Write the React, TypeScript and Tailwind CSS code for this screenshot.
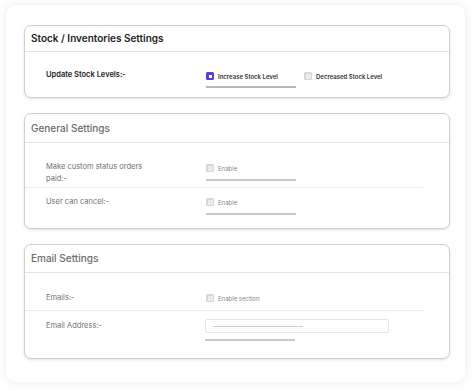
import React from 'react';

function Box({ checked = false }: { checked?: boolean }) {
  if (checked) {
    return (
      <span className="flex h-[8px] w-[8px] items-center justify-center rounded-[1.5px] bg-[#5a3bd8]">
        <span className="h-[3px] w-[3px] bg-white" />
      </span>
    );
  }
  return (
    <span className="flex h-[8px] w-[8px] items-center justify-center rounded-[1.5px] bg-[#d6d6d6]">
      <span className="h-[5px] w-[5px] bg-[#ececec]" />
    </span>
  );
}

function Check({ label, checked = false, bold = false }: { label: string; checked?: boolean; bold?: boolean }) {
  return (
    <div className="flex h-[12px] items-center gap-[4px]">
      <Box checked={checked} />
      <span className={bold ? 'text-[6px] font-semibold text-[#333]' : 'text-[6px] text-[#888]'}>{label}</span>
    </div>
  );
}

function Card({ title, head, dark = false, children }: { title: string; head: string; dark?: boolean; children: React.ReactNode }) {
  return (
    <div className="rounded-[7px] border border-[#cfcfcf] bg-white shadow-[0_1px_3px_rgba(0,0,0,0.12)]">
      <div
        className={
          dark
            ? `flex ${head} items-center border-b border-[#e3e3e3] px-[6px] text-[10px] font-semibold text-[#222]`
            : `flex ${head} items-center border-b border-[#e3e3e3] px-[6px] text-[10px] font-medium text-[#6b6b6b]`
        }
      >
        {title}
      </div>
      {children}
    </div>
  );
}

const underline = 'h-[1.5px] w-[90px] bg-[#c9c9c9]';

export default function App() {
  return (
    <div className="min-h-screen bg-white pl-[6px] pt-[5px]" style={{ fontFamily: 'Inter, "Noto Sans", sans-serif' }}>
      <div className="flex h-[377px] w-[459px] flex-col gap-[15px] rounded-[10px] bg-white pl-[18px] pr-[15px] pt-[20px] shadow-[0_0_10px_rgba(0,0,0,0.09)]">
        <Card title="Stock / Inventories Settings" head="h-[26px]" dark>
          <div className="flex h-[45px] pl-[21px] pt-[17px]">
            <div className="w-[160px] text-[7.5px] leading-[12px] font-semibold text-[#222]">Update Stock Levels:-</div>
            <div className="pt-[1px]">
              <div className="flex gap-[8px]">
                <div>
                  <Check label="Increase Stock Level" checked bold />
                  <div className="mt-[4px] h-[2px] w-[90px] bg-[#b8b8b8]" />
                </div>
                <Check label="Decreased Stock Level" bold />
              </div>
            </div>
          </div>
        </Card>

        <Card title="General Settings" head="h-[29px]">
          <div className="mr-[26px] flex h-[45px] border-b border-[#ececec] pl-[21px] pt-[18px]">
            <div className="w-[160px] pr-[45px] text-[7.5px] leading-[12px] text-[#707070]">Make custom status orders paid:-</div>
            <div className="pt-[1px]">
              <Check label="Enable" />
              <div className={`mt-[5px] ${underline}`} />
            </div>
          </div>
          <div className="flex h-[40px] pl-[21px] pt-[8px]">
            <div className="w-[160px] text-[7.5px] leading-[12px] text-[#707070]">User can cancel:-</div>
            <div>
              <Check label="Enable" />
              <div className={`mt-[5px] ${underline}`} />
            </div>
          </div>
        </Card>

        <Card title="Email Settings" head="h-[28px]">
          <div className="mr-[26px] flex h-[38px] border-b border-[#ececec] pl-[21px] pt-[19px]">
            <div className="w-[160px] text-[7.5px] leading-[12px] text-[#707070]">Emails:-</div>
            <Check label="Enable section" />
          </div>
          <div className="flex h-[47px] pl-[21px] pt-[9px]">
            <div className="w-[159px] text-[7.5px] leading-[12px] text-[#707070]">Email Address:-</div>
            <div className="-mt-[1px]">
              <div className="flex h-[14px] w-[184px] items-center rounded-[2px] border border-[#e6e6e6] px-[7px]">
                <div className="h-[1px] w-[90px] bg-[#cfcfcf]" />
              </div>
              <div className={`mt-[6px] ${underline}`} />
            </div>
          </div>
        </Card>
      </div>
    </div>
  );
}
